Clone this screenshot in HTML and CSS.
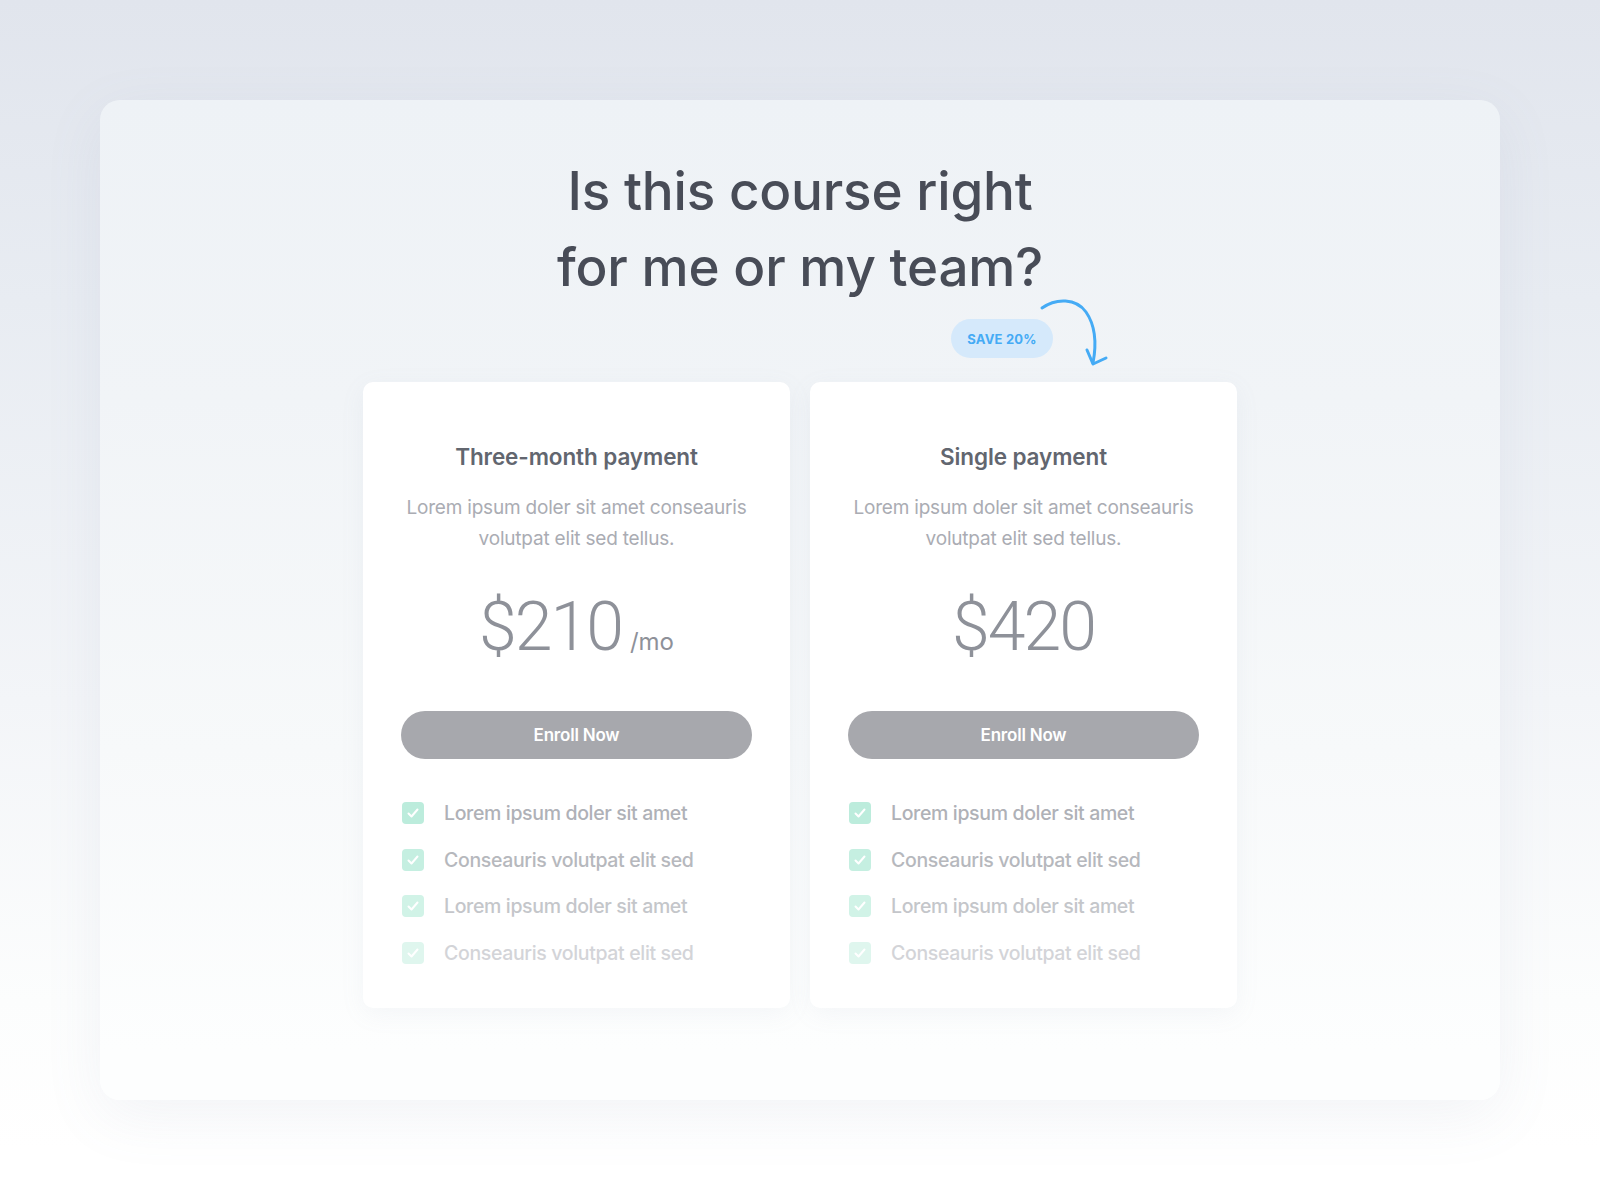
FILE: index.html
```html
<!DOCTYPE html>
<html lang="en">
<head>
<meta charset="utf-8">
<title>Pricing</title>
<link rel="stylesheet" href="styles.css">
</head>
<body>
<main class="panel">
  <h1 class="headline">Is this course right<br>for me or my team?</h1>
  <div class="plans">
    <span class="save-badge">SAVE 20%</span>
    <svg class="save-arrow" width="80" height="84" viewBox="0 0 80 84" fill="none" stroke="#45abf5" stroke-linecap="round" stroke-linejoin="round">
      <path d="M12 18 C 26 8, 46 8, 56 22 C 65 35, 67 52, 63 73" stroke-width="3"/>
      <path d="M57 60 L 63 74 L 76 68" stroke-width="3"/>
    </svg>

    <section class="plan">
      <h2 class="plan-title">Three-month payment</h2>
      <p class="plan-desc">Lorem ipsum doler sit amet conseauris volutpat elit sed tellus.</p>
      <div class="plan-price"><span class="amount">$210</span><span class="per">/mo</span></div>
      <button class="enroll">Enroll Now</button>
      <ul class="features">
        <li class="f1"><span class="check"><svg viewBox="0 0 22 22" width="22" height="22"><path d="M6.5 11.5 L9.5 14.5 L15.5 7.5" fill="none" stroke="#fff" stroke-width="2" stroke-linecap="round" stroke-linejoin="round"/></svg></span>Lorem ipsum doler sit amet</li>
        <li class="f2"><span class="check"><svg viewBox="0 0 22 22" width="22" height="22"><path d="M6.5 11.5 L9.5 14.5 L15.5 7.5" fill="none" stroke="#fff" stroke-width="2" stroke-linecap="round" stroke-linejoin="round"/></svg></span>Conseauris volutpat elit sed</li>
        <li class="f3"><span class="check"><svg viewBox="0 0 22 22" width="22" height="22"><path d="M6.5 11.5 L9.5 14.5 L15.5 7.5" fill="none" stroke="#fff" stroke-width="2" stroke-linecap="round" stroke-linejoin="round"/></svg></span>Lorem ipsum doler sit amet</li>
        <li class="f4"><span class="check"><svg viewBox="0 0 22 22" width="22" height="22"><path d="M6.5 11.5 L9.5 14.5 L15.5 7.5" fill="none" stroke="#fff" stroke-width="2" stroke-linecap="round" stroke-linejoin="round"/></svg></span>Conseauris volutpat elit sed</li>
      </ul>
    </section>

    <section class="plan">
      <h2 class="plan-title">Single payment</h2>
      <p class="plan-desc">Lorem ipsum doler sit amet conseauris volutpat elit sed tellus.</p>
      <div class="plan-price"><span class="amount">$420</span></div>
      <button class="enroll">Enroll Now</button>
      <ul class="features">
        <li class="f1"><span class="check"><svg viewBox="0 0 22 22" width="22" height="22"><path d="M6.5 11.5 L9.5 14.5 L15.5 7.5" fill="none" stroke="#fff" stroke-width="2" stroke-linecap="round" stroke-linejoin="round"/></svg></span>Lorem ipsum doler sit amet</li>
        <li class="f2"><span class="check"><svg viewBox="0 0 22 22" width="22" height="22"><path d="M6.5 11.5 L9.5 14.5 L15.5 7.5" fill="none" stroke="#fff" stroke-width="2" stroke-linecap="round" stroke-linejoin="round"/></svg></span>Conseauris volutpat elit sed</li>
        <li class="f3"><span class="check"><svg viewBox="0 0 22 22" width="22" height="22"><path d="M6.5 11.5 L9.5 14.5 L15.5 7.5" fill="none" stroke="#fff" stroke-width="2" stroke-linecap="round" stroke-linejoin="round"/></svg></span>Lorem ipsum doler sit amet</li>
        <li class="f4"><span class="check"><svg viewBox="0 0 22 22" width="22" height="22"><path d="M6.5 11.5 L9.5 14.5 L15.5 7.5" fill="none" stroke="#fff" stroke-width="2" stroke-linecap="round" stroke-linejoin="round"/></svg></span>Conseauris volutpat elit sed</li>
      </ul>
    </section>
  </div>
</main>
</body>
</html>
```
FILE: styles.css
```css
html, body {
  margin: 0;
  padding: 0;
}
body {
  width: 1600px;
  height: 1200px;
  overflow: hidden;
  font-family: Inter, "Noto Sans", "Liberation Sans", sans-serif;
  background: linear-gradient(180deg, #e1e5ed 0px, #e8ecf2 300px, #f3f5f8 700px, #fcfdfd 1000px, #ffffff 1150px);
  padding-top: 100px;
  box-sizing: border-box;
}
.panel {
  width: 1400px;
  height: 1000px;
  margin: 0 auto;
  box-sizing: border-box;
  border-radius: 20px;
  background: linear-gradient(180deg, #eef2f6 0px, #f1f4f7 300px, #f7f9fa 650px, #fdfefe 950px);
  box-shadow: 0 16px 60px rgba(120, 135, 165, 0.09);
  padding-top: 53px;
  display: flex;
  flex-direction: column;
  align-items: center;
}
.headline {
  margin: 0;
  font-size: 53px;
  line-height: 76px;
  font-weight: 500;
  letter-spacing: -0.2px;
  color: #484c57;
  text-align: center;
}
.plans {
  position: relative;
  margin-top: 77px;
  display: flex;
  gap: 20px;
}
.save-badge {
  position: absolute;
  left: 588px;
  top: -63px;
  width: 102px;
  height: 39px;
  border-radius: 20px;
  background: #d5e9fb;
  color: #45abf5;
  font-size: 13px;
  font-weight: 700;
  letter-spacing: 0.2px;
  display: flex;
  align-items: center;
  justify-content: center;
}
.save-arrow {
  position: absolute;
  left: 667px;
  top: -92px;
}
.plan {
  width: 427px;
  height: 626px;
  box-sizing: border-box;
  background: #ffffff;
  border-radius: 10px;
  box-shadow: 0 6px 24px rgba(140, 155, 180, 0.08);
  padding: 60px 38px 0;
  display: flex;
  flex-direction: column;
  align-items: center;
}
.plan-title {
  margin: 0;
  font-size: 22.5px;
  line-height: 30px;
  font-weight: 600;
  color: #62666f;
  letter-spacing: -0.1px;
}
.plan-desc {
  margin: 20px 0 0;
  font-size: 19px;
  line-height: 31px;
  color: #aaacb3;
  text-align: center;
  width: 345px;
  letter-spacing: -0.2px;
}
.plan-price {
  margin-top: 33px;
  height: 80px;
  display: flex;
  align-items: baseline;
  color: #8e9199;
  font-family: Roboto, "Liberation Sans", sans-serif;
  line-height: 80px;
}
.amount {
  font-size: 68px;
  font-weight: 300;
  letter-spacing: -2px;
}
.per {
  font-size: 24px;
  line-height: 24px;
  margin-left: 8px;
  font-family: Inter, sans-serif;
}
.enroll {
  margin-top: 44px;
  width: 351px;
  height: 48px;
  flex-shrink: 0;
  border: none;
  border-radius: 24px;
  background: #a7a8ad;
  color: #ffffff;
  font-family: Inter, "Noto Sans", sans-serif;
  font-size: 17px;
  font-weight: 600;
  letter-spacing: -0.2px;
}
.features {
  list-style: none;
  margin: 31px 0 0;
  padding: 0;
  align-self: stretch;
}
.features li {
  display: flex;
  align-items: center;
  height: 46.5px;
  font-size: 19.5px;
  letter-spacing: -0.35px;
  font-weight: 500;
  padding-left: 1px;
}
.check {
  width: 22px;
  height: 22px;
  border-radius: 4px;
  margin-right: 20px;
  display: flex;
}
.f1 { color: #afb1b7; }
.f2 { color: #b6b8bd; }
.f3 { color: #c4c6ca; }
.f4 { color: #d3d4d8; }
.f1 .check { background: #bcecdc; }
.f2 .check { background: #c5efe1; }
.f3 .check { background: #d1f3e7; }
.f4 .check { background: #dff6ee; }
```
